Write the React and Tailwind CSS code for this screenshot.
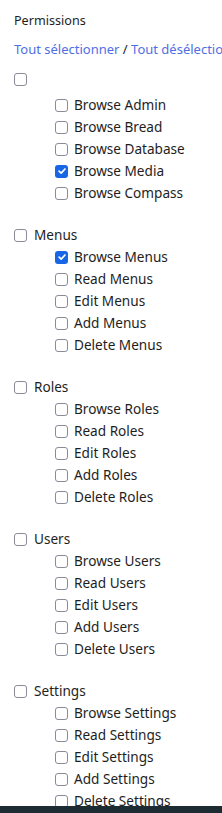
import React from 'react';

const groups = [
  { name: '', items: ['Browse Admin', 'Browse Bread', 'Browse Database', 'Browse Media', 'Browse Compass'], checked: ['Browse Media'] },
  { name: 'Menus', items: ['Browse Menus', 'Read Menus', 'Edit Menus', 'Add Menus', 'Delete Menus'], checked: ['Browse Menus'] },
  { name: 'Roles', items: ['Browse Roles', 'Read Roles', 'Edit Roles', 'Add Roles', 'Delete Roles'], checked: [] },
  { name: 'Users', items: ['Browse Users', 'Read Users', 'Edit Users', 'Add Users', 'Delete Users'], checked: [] },
  { name: 'Settings', items: ['Browse Settings', 'Read Settings', 'Edit Settings', 'Add Settings', 'Delete Settings'], checked: [] },
];

function Box({ checked }) {
  if (checked) {
    return (
      <span className="flex h-[13px] w-[13px] shrink-0 items-center justify-center rounded-[3px] bg-[#1766e6]">
        <svg viewBox="0 0 12 12" className="h-[10px] w-[10px]" fill="none" stroke="white" strokeWidth="2" strokeLinecap="round" strokeLinejoin="round">
          <path d="M2.5 6.2 L5 8.6 L9.6 3.6" />
        </svg>
      </span>
    );
  }
  return <span className="block h-[13px] w-[13px] shrink-0 rounded-[3px] border-[1.5px] border-[#8c8a97] bg-white" />;
}

function Group({ group, first }) {
  return (
    <div className={first ? '' : 'mt-[20px]'}>
      <label className="flex h-[22px] items-center">
        <Box checked={false} />
        <span className="ml-[7px]">{group.name}</span>
      </label>
      <div className={first ? 'mt-[4px]' : ''}>
        {group.items.map((item) => (
          <label key={item} className="flex h-[22px] items-center pl-[41px]">
            <Box checked={group.checked.includes(item)} />
            <span className="ml-[6px]">{item}</span>
          </label>
        ))}
      </div>
    </div>
  );
}

export default function App() {
  return (
    <div className="relative h-[813px] w-[222px] overflow-hidden bg-white pl-[14px] pt-[11px] text-[13.6px] text-[#1e1e1e]" style={{ fontFamily: '"Noto Sans", "Open Sans", sans-serif' }}>
      <div className="h-[20px] text-[12.6px] leading-[20px]">Permissions</div>
      <div className="mt-[8px] h-[20px] whitespace-nowrap text-[13px] leading-[20px] text-[#4f6fe3]">
        <span>Tout sélectionner</span>
        <span className="text-[#1e1e1e]"> / </span>
        <span>Tout désélectionner</span>
      </div>
      <div className="mt-[9px]">
        {groups.map((g, i) => (
          <Group key={i} group={g} first={i === 0} />
        ))}
      </div>
      <div className="fixed bottom-0 left-0 h-[7px] w-full bg-[#1d2b32]" />
    </div>
  );
}
